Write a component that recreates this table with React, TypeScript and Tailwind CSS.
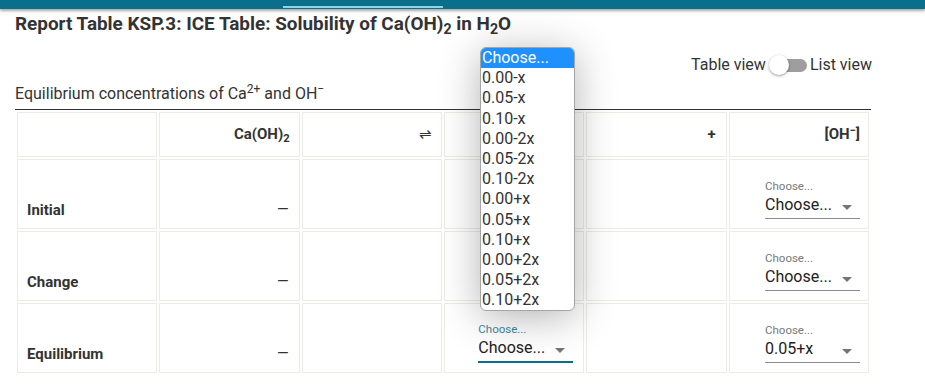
import React from "react";

const options = [
  "0.00-x",
  "0.05-x",
  "0.10-x",
  "0.00-2x",
  "0.05-2x",
  "0.10-2x",
  "0.00+x",
  "0.05+x",
  "0.10+x",
  "0.00+2x",
  "0.05+2x",
  "0.10+2x",
];

const Caret = () => (
  <svg width="10" height="5" viewBox="0 0 10 5" className="mb-[4px]">
    <path d="M0 0 L10 0 L5 5 Z" fill="#757575" />
  </svg>
);

type SelectProps = { value?: string; focused?: boolean; hidden?: boolean };

// the open list covers these ones, so they are kept but not painted
const FakeSelect = ({ value = "Choose...", focused, hidden }: SelectProps) => (
  <div className={`ml-auto w-[95px] text-left ${hidden ? "invisible" : ""}`}>
    <div className={`text-[11.5px] leading-[14px] ${focused ? "text-[#3f8aa0]" : "text-[#7a7a7a]"}`}>
      Choose...
    </div>
    <div
      className={`flex items-end justify-between pb-[4px] pt-[2px] ${
        focused ? "border-b-2 border-[#0b6e8a]" : "border-b border-[#8a8a8a]"
      }`}
    >
      <span className="text-[16px] leading-[19px] text-[#222]">{value}</span>
      <span className="mr-[8px]">
        <Caret />
      </span>
    </div>
  </div>
);

const rows = [
  { label: "Initial", ca: <FakeSelect hidden />, oh: <FakeSelect /> },
  { label: "Change", ca: <FakeSelect hidden />, oh: <FakeSelect /> },
  { label: "Equilibrium", ca: <FakeSelect focused />, oh: <FakeSelect value="0.05+x" /> },
];

const cell = "border border-[#ecebe6] align-bottom";

export default function App() {
  return (
    <div className="relative min-h-[390px] w-[925px] bg-white text-[#333] font-['Roboto',sans-serif]">
      <div className="relative h-[9px] bg-[#0b6e8a] shadow-[0_2px_3px_rgba(0,0,0,0.35)]">
        <div className="absolute left-[283px] top-[6px] h-[2px] w-[160px] bg-[#8fd5ea]" />
      </div>

      <div className="px-[15px]">
        <h1 className="mt-[3px] text-[18.9px] font-bold leading-[24px] text-[#333]">
          Report Table KSP.3: ICE Table: Solubility of Ca(OH)<sub>2</sub> in H<sub>2</sub>O
        </h1>

        <div className="mt-[19px] flex items-center justify-end pr-[38px] text-[16px] leading-[20px]">
          <span>Table view</span>
          <span className="relative ml-[3px] mr-[3px] flex h-[20px] w-[38px] items-center">
            <span className="ml-[4px] h-[13px] w-[34px] rounded-full bg-[#9e9e9e]" />
            <span className="absolute left-0 top-0 h-[20px] w-[20px] rounded-full bg-white shadow-[0_1px_3px_rgba(0,0,0,0.4)]" />
          </span>
          <span>List view</span>
        </div>

        <div className="mt-[10px] w-[856px] border-b border-[#333] pb-[6px] text-[16px] leading-[18px]">
          Equilibrium concentrations of Ca<sup>2+</sup> and OH<sup>−</sup>
        </div>

        <table className="w-[856px] table-fixed border-separate border-spacing-[2px] text-[15px]">
          <thead>
            <tr className="h-[45px] font-bold">
              <th className={`${cell} align-middle`} />
              <th className={`${cell} pr-[9px] text-right align-middle font-bold`}>
                Ca(OH)<sub>2</sub>
              </th>
              <th className={`${cell} pr-[9px] text-right align-middle font-normal`}>⇌</th>
              <th className={`${cell} pr-[9px] text-right align-middle font-bold`}>
                <span className="invisible">
                  [Ca<sup>2+</sup>]
                </span>
              </th>
              <th className={`${cell} pr-[10px] text-right align-middle font-bold`}>+</th>
              <th className={`${cell} pr-[8px] text-right align-middle font-bold`}>
                [OH<sup>−</sup>]
              </th>
            </tr>
          </thead>
          <tbody>
            {rows.map((r) => (
              <tr key={r.label} className="h-[70px]">
                <td className={`${cell} pb-[9px] pl-[9px] font-bold leading-[18px]`}>{r.label}</td>
                <td className={`${cell} pb-[10px] pr-[10px] text-right leading-[18px]`}>—</td>
                <td className={cell} />
                <td className={`${cell} pb-[9px] pr-[10px]`}>{r.ca}</td>
                <td className={cell} />
                <td className={`${cell} pb-[9px] pr-[8px]`}>{r.oh}</td>
              </tr>
            ))}
          </tbody>
        </table>
      </div>

      <div className="absolute left-[480px] top-[47px] w-[95px] overflow-hidden rounded-[6px] border border-[#a5a5a5] bg-white shadow-[0_6px_40px_rgba(0,0,0,0.3)]">
        <div className="h-[20.2px] bg-[#1e90ff] pl-[1px] text-[16px] leading-[20px] text-white">Choose...</div>
        {options.map((o) => (
          <div key={o} className="h-[20.2px] pl-[1px] text-[16px] leading-[20px] text-[#333]">
            {o}
          </div>
        ))}
      </div>
    </div>
  );
}
